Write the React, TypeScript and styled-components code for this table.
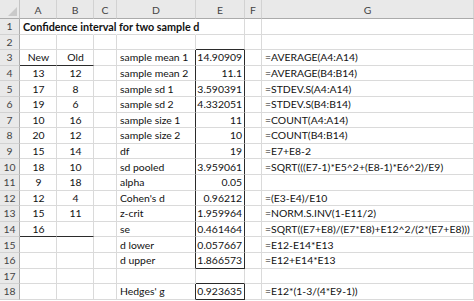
import styled, { createGlobalStyle } from "styled-components";

const GlobalStyle = createGlobalStyle`
  html, body {
    margin: 0;
    padding: 0;
    background: #ffffff;
    overflow: hidden;
  }
`;

const COLS = ["A", "B", "C", "D", "E", "F", "G"];
const ALIGN = ["center", "center", "left", "left", "right", "left", "left"];

// A..G values per row (row 1 first)
const rows: string[][] = [
  ["Confidence interval for two sample d", "", "", "", "", "", ""],
  ["", "", "", "", "", "", ""],
  ["New", "Old", "", "sample mean 1", "14.90909", "", "=AVERAGE(A4:A14)"],
  ["13", "12", "", "sample mean 2", "11.1", "", "=AVERAGE(B4:B14)"],
  ["17", "8", "", "sample sd 1", "3.590391", "", "=STDEV.S(A4:A14)"],
  ["19", "6", "", "sample sd 2", "4.332051", "", "=STDEV.S(B4:B14)"],
  ["10", "16", "", "sample size 1", "11", "", "=COUNT(A4:A14)"],
  ["20", "12", "", "sample size 2", "10", "", "=COUNT(B4:B14)"],
  ["15", "14", "", "df", "19", "", "=E7+E8-2"],
  ["18", "10", "", "sd pooled", "3.959061", "", "=SQRT(((E7-1)*E5^2+(E8-1)*E6^2)/E9)"],
  ["9", "18", "", "alpha", "0.05", "", ""],
  ["12", "4", "", "Cohen's d", "0.96212", "", "=(E3-E4)/E10"],
  ["15", "11", "", "z-crit", "1.959964", "", "=NORM.S.INV(1-E11/2)"],
  ["16", "", "", "se", "0.461464", "", "=SQRT((E7+E8)/(E7*E8)+E12^2/(2*(E7+E8)))"],
  ["", "", "", "d lower", "0.057667", "", "=E12-E14*E13"],
  ["", "", "", "d upper", "1.866573", "", "=E12+E14*E13"],
  ["", "", "", "", "", "", ""],
  ["", "", "", "Hedges' g", "0.923635", "", "=E12*(1-3/(4*E9-1))"],
];

const Sheet = styled.div`
  display: grid;
  grid-template-columns: 20px 37px 37px 23px 79px 49px 17px 1fr;
  grid-template-rows: 19px repeat(18, 15.6px);
  width: 474px;
  height: 301px;
  overflow: hidden;
  font-family: Lato, "Liberation Sans", sans-serif;
  font-size: 10.4px;
  color: #111;
`;

const Corner = styled.div`
  position: relative;
  background: #e9e9e9;
  border-right: 1px solid #c4c4c4;
  border-bottom: 1px solid #ababab;
  box-sizing: border-box;

  &::after {
    content: "";
    position: absolute;
    right: 2px;
    bottom: 2px;
    border-style: solid;
    border-width: 0 0 9px 9px;
    border-color: transparent transparent #c9c9c9 transparent;
  }
`;

const ColHead = styled.div`
  display: flex;
  align-items: center;
  justify-content: center;
  background: #e9e9e9;
  color: #444;
  border-right: 1px solid #d2d2d2;
  border-bottom: 1px solid #ababab;
  box-sizing: border-box;
  padding-top: 2px;
`;

const RowHead = styled.div`
  display: flex;
  align-items: center;
  justify-content: center;
  background: #e9e9e9;
  color: #444;
  border-right: 1px solid #ababab;
  border-bottom: 1px solid #d2d2d2;
  box-sizing: border-box;
`;

const Cell = styled.div<{
  $align: string;
  $bold?: boolean;
  $rightDark?: boolean;
  $bottomDark?: boolean;
  $noRight?: boolean;
}>`
  display: flex;
  align-items: center;
  justify-content: ${(p) =>
    p.$align === "center" ? "center" : p.$align === "right" ? "flex-end" : "flex-start"};
  padding: 0 2px 0 3px;
  box-sizing: border-box;
  white-space: nowrap;
  overflow: visible;
  min-width: 0;
  font-weight: ${(p) => (p.$bold ? 700 : 400)};
  font-size: ${(p) => (p.$bold ? "10.8px" : "inherit")};
  border-right: 1px solid
    ${(p) => (p.$rightDark ? "#2b2b2b" : p.$noRight ? "transparent" : "#dadada")};
  border-bottom: 1px solid ${(p) => (p.$bottomDark ? "#2b2b2b" : "#dadada")};
  position: relative;
  z-index: ${(p) => (p.$bold ? 1 : 0)};
`;

const boxRows = (r: number) => r >= 3 && r <= 16;

const App = () => {
  return (
    <>
      <GlobalStyle />
      <Sheet>
        <Corner />
        {COLS.map((c) => (
          <ColHead key={c}>{c}</ColHead>
        ))}
        {rows.map((row, i) => {
          const r = i + 1;
          return [
            <RowHead key={`h${r}`}>{r}</RowHead>,
            ...row.map((v, ci) => {
              const col = COLS[ci];
              const rightDark =
                (col === "D" || col === "E") && (boxRows(r) || r === 18);
              const bottomDark =
                ((col === "A" || col === "B") && (r === 3 || r === 14)) ||
                (col === "E" && (r === 2 || r === 16 || r === 17 || r === 18));
              return (
                <Cell
                  key={`${col}${r}`}
                  $align={r === 1 ? "left" : ALIGN[ci]}
                  $bold={r === 1 && col === "A"}
                  $rightDark={rightDark}
                  $bottomDark={bottomDark}
                  $noRight={r === 1 && ci < 4}
                >
                  {v}
                </Cell>
              );
            }),
          ];
        })}
      </Sheet>
    </>
  );
};

export default App;
